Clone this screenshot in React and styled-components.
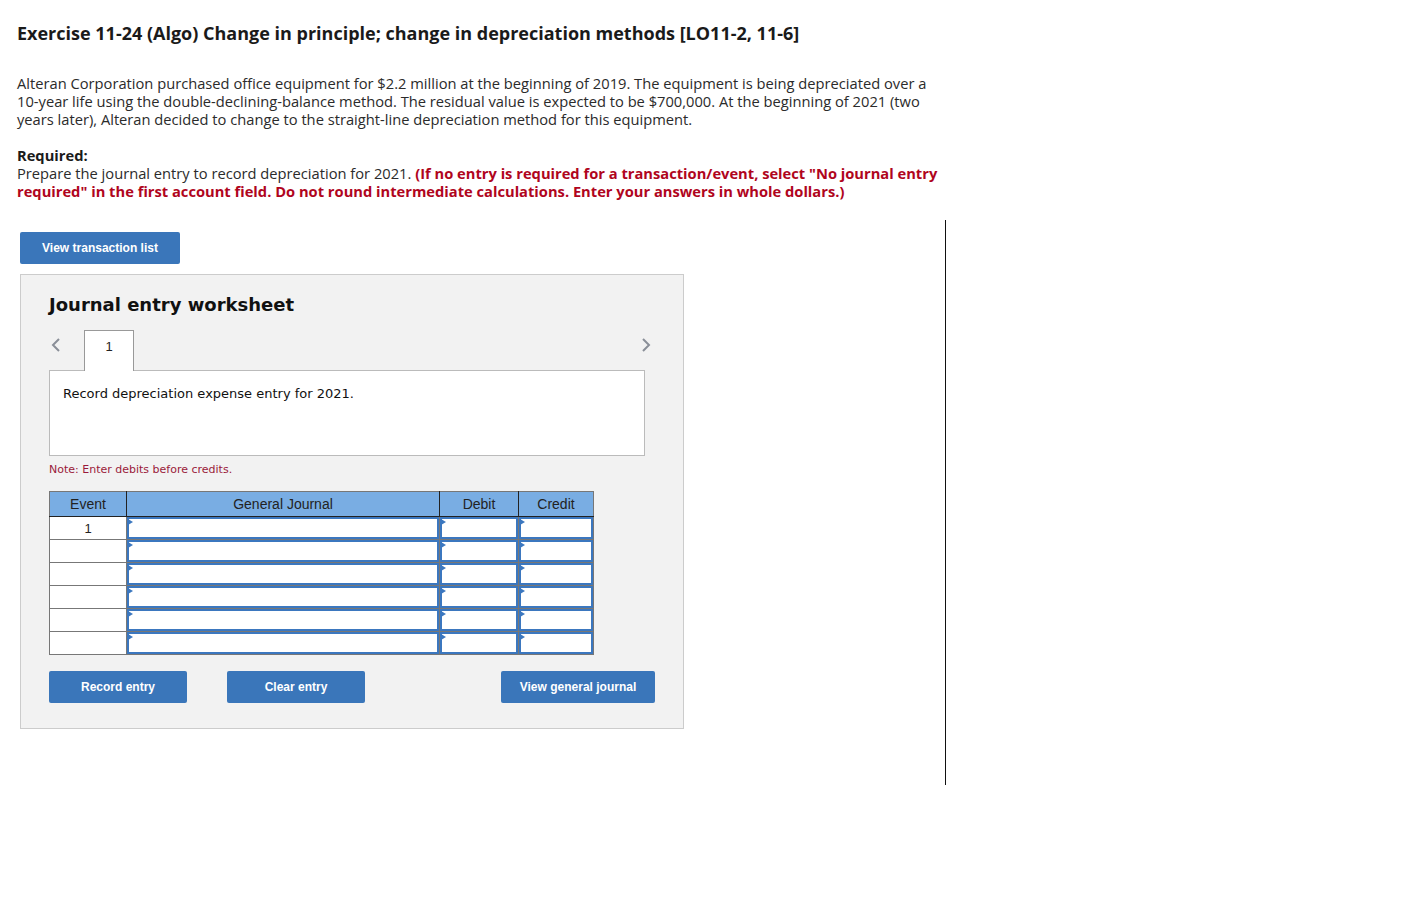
import React from 'react'
import styled, { createGlobalStyle } from 'styled-components'

const GlobalStyle = createGlobalStyle`
  body {
    margin: 0;
    background: #fff;
    font-family: "Open Sans", "Liberation Sans", sans-serif;
    color: #222;
  }
`

const Page = styled.div`
  padding: 22px 0 0 17px;
  width: 935px;
`

const Title = styled.h1`
  font-family: "Open Sans", "Liberation Sans", sans-serif;
  font-size: 18px;
  font-weight: 700;
  margin: 0 0 30px;
  color: #1a1a1a;
  line-height: 22px;
`

const Para = styled.p`
  font-family: "Open Sans", "Liberation Sans", sans-serif;
  font-size: 14.7px;
  line-height: 18px;
  margin: 0 0 18px;
  color: #2b2b2b;
`

const NoWrap = styled.span`
  white-space: nowrap;
`

const Strong = styled.span`
  display: block;
  font-weight: 700;
  color: #1a1a1a;
`

const Warn = styled.b`
  color: #b0051d;
  font-weight: 700;
`

const Work = styled.div`
  width: 925px;
  margin: 20px 0 0 -17px;
  padding: 12px 0 0 20px;
  min-height: 553px;
  border-right: 1px solid #111;
`

const Button = styled.button`
  font-family: "Liberation Sans", Arial, sans-serif;
  font-size: 12px;
  font-weight: 700;
  color: #fff;
  background: #3a76ba;
  border: none;
  border-radius: 2px;
  height: 32px;
  width: ${p => p.w}px;
  padding: 0;
  cursor: pointer;
`

const Panel = styled.div`
  margin-top: 10px;
  width: 664px;
  height: 455px;
  background: #f2f2f2;
  border: 1px solid #ccc;
  padding: 0 0 0 28px;
  box-sizing: border-box;
`

const PanelTitle = styled.h2`
  font-family: "DejaVu Sans", Verdana, sans-serif;
  font-size: 18px;
  font-weight: 700;
  margin: 0;
  padding-top: 19px;
  line-height: 22px;
  color: #111;
`

const TabRow = styled.div`
  display: flex;
  align-items: flex-end;
  margin-top: 14px;
  width: 602px;
  height: 40px;
`

const Chevron = styled.span`
  width: 35px;
  display: flex;
  align-items: center;
  height: 30px;
  padding-left: 2px;
  box-sizing: border-box;
  margin-bottom: 10px;
  justify-content: ${p => (p.right ? 'flex-end' : 'flex-start')};
  margin-left: ${p => (p.right ? 'auto' : '0')};
`

const Tab = styled.div`
  width: 50px;
  height: 41px;
  background: #fff;
  border: 1px solid #999;
  border-bottom: none;
  box-sizing: border-box;
  font-family: "Liberation Sans", Arial, sans-serif;
  font-size: 13px;
  text-align: center;
  padding-top: 8px;
  position: relative;
  z-index: 1;
  margin-bottom: -1px;
`

const Desc = styled.div`
  width: 596px;
  height: 86px;
  background: #fff;
  border: 1px solid #bbb;
  box-sizing: border-box;
  padding: 15px 13px;
  font-family: "DejaVu Sans", Verdana, sans-serif;
  font-size: 13px;
  color: #111;
`

const Note = styled.div`
  font-family: "DejaVu Sans", Verdana, sans-serif;
  font-size: 11px;
  color: #9a1a3a;
  margin: 7px 0 14px;
  line-height: 14px;
`

const Table = styled.table`
  border-collapse: collapse;
  font-family: "Liberation Sans", Arial, sans-serif;
  font-size: 14px;
  border: 1px solid #777;
`

const Th = styled.th`
  background: #79ade3;
  font-weight: 400;
  color: #222;
  height: 24px;
  padding: 0;
  width: ${p => p.w}px;
  border-bottom: 1px solid #222;
  border-left: 1px solid #222;
  &:first-child { border-left: none; }
`

const Td = styled.td`
  padding: 0;
  height: 22px;
  background: #fff;
  border: 1px solid #777;
  text-align: center;
  font-size: 13px;
  color: #222;
  vertical-align: middle;
`

const InputTd = styled.td`
  padding: 0;
  height: 22px;
  border: 1px solid #777;
  background: #fff;
`

const Field = styled.div`
  position: relative;
  height: 22px;
  border: 2px solid #3b77bf;
  box-sizing: border-box;
  background: #fff;
  &::before {
    content: '';
    position: absolute;
    left: -1px;
    top: 0;
    border-left: 5px solid #3b77bf;
    border-top: 3px solid transparent;
    border-bottom: 3px solid transparent;
  }
`

const Actions = styled.div`
  display: flex;
  gap: 40px;
  margin-top: 16px;
  width: 606px;
`

const Spacer = styled.div`
  flex: 1;
`

const ChevronIcon = ({ dir }) => (
  <svg width="10" height="16" viewBox="0 0 10 16">
    <path
      d={dir === 'left' ? 'M8 2 L2 8 L8 14' : 'M2 2 L8 8 L2 14'}
      fill="none"
      stroke="#8a8f98"
      strokeWidth="2"
    />
  </svg>
)

export default function App() {
  const rows = [1, 2, 3, 4, 5, 6]
  return (
    <>
      <GlobalStyle />
      <Page>
        <Title>Exercise 11-24 (Algo) Change in principle; change in depreciation methods [LO11-2, 11-6]</Title>
        <Para>
          Alteran Corporation purchased office equipment for $2.2 million at the beginning of 2019. The equipment is being depreciated over a <NoWrap>10-year</NoWrap> life using the double-declining-balance method. The residual value is expected to be $700,000. At the beginning of 2021 (two years later), Alteran decided to change to the straight-line depreciation method for this equipment.
        </Para>
        <Para>
          <Strong>Required:</Strong>
          Prepare the journal entry to record depreciation for 2021.{' '}
          <Warn>(If no entry is required for a transaction/event, select "No journal entry required" in the first account field. Do not round intermediate calculations. Enter your answers in whole dollars.)</Warn>
        </Para>
        <Work>
          <Button w={160}>View transaction list</Button>
          <Panel>
            <PanelTitle>Journal entry worksheet</PanelTitle>
            <TabRow>
              <Chevron><ChevronIcon dir="left" /></Chevron>
              <Tab>1</Tab>
              <Chevron right><ChevronIcon dir="right" /></Chevron>
            </TabRow>
            <Desc>Record depreciation expense entry for 2021.</Desc>
            <Note>Note: Enter debits before credits.</Note>
            <Table>
              <thead>
                <tr>
                  <Th w={76}>Event</Th>
                  <Th w={312}>General Journal</Th>
                  <Th w={78}>Debit</Th>
                  <Th w={74}>Credit</Th>
                </tr>
              </thead>
              <tbody>
                {rows.map(r => (
                  <tr key={r}>
                    <Td>{r === 1 ? '1' : ''}</Td>
                    <InputTd><Field /></InputTd>
                    <InputTd><Field /></InputTd>
                    <InputTd><Field /></InputTd>
                  </tr>
                ))}
              </tbody>
            </Table>
            <Actions>
              <Button w={138}>Record entry</Button>
              <Button w={138}>Clear entry</Button>
              <Spacer />
              <Button w={154}>View general journal</Button>
            </Actions>
          </Panel>
        </Work>
      </Page>
    </>
  )
}
